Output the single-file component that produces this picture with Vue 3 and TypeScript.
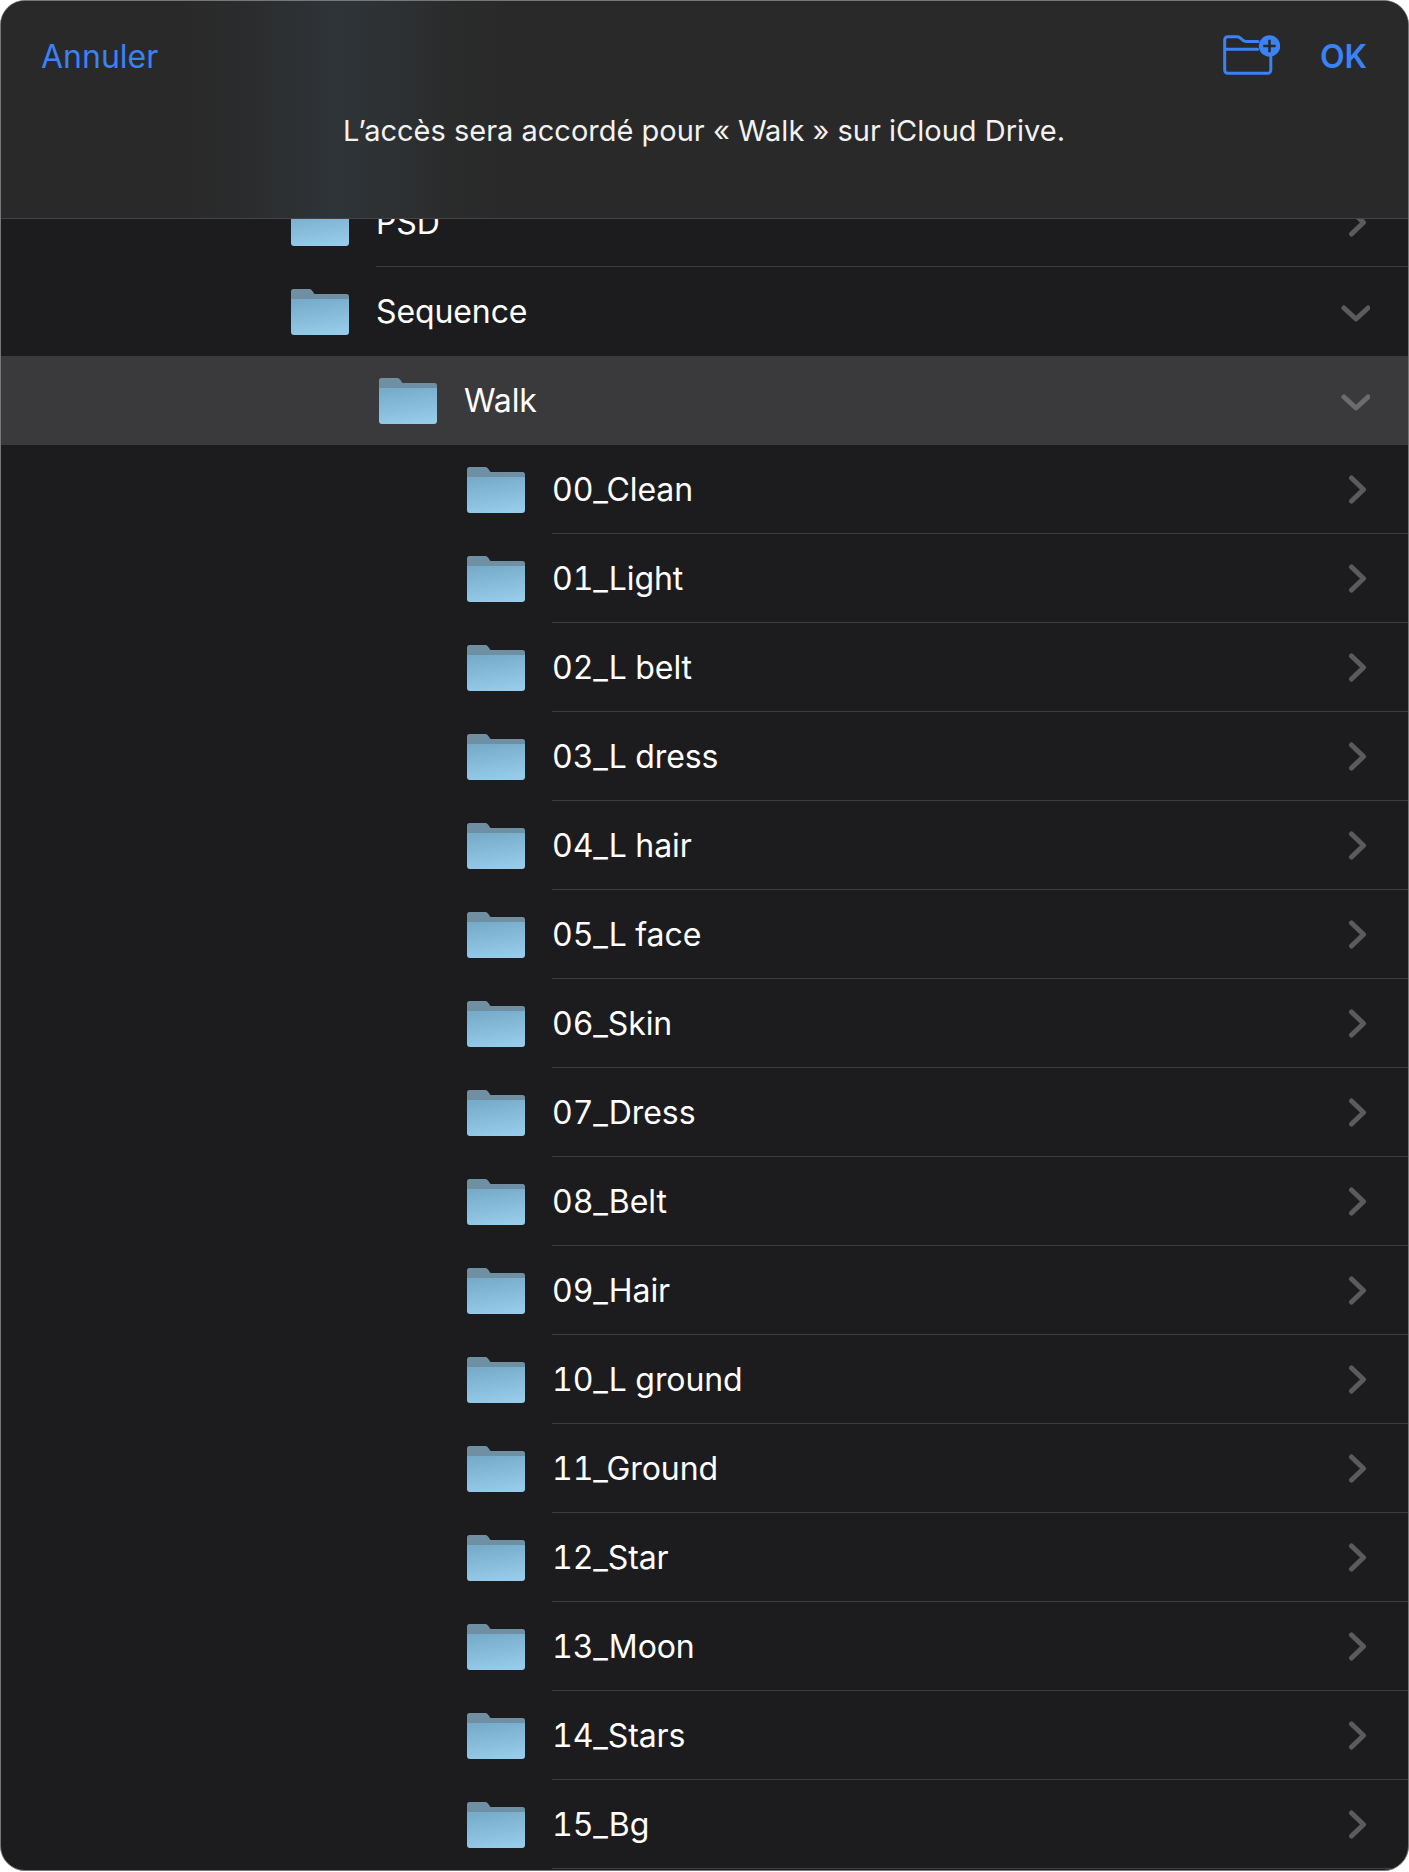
<template>
  <div class="picker">
    <header class="picker__bar">
      <div class="picker__actions">
        <button class="text-btn">Annuler</button>
        <div class="picker__right">
          <svg class="new-folder" width="57" height="40" viewBox="0 0 57 40" fill="none">
            <path
              d="M47.8 20v15.2a3 3 0 0 1-3 3H4.700a3 3 0 0 1-3-3V4.800a3 3 0 0 1 3-3h9.200c2.600 0 3.400 1 4.600 2.200 1.200 1.200 2 2.400 4.400 2.400H35M2 14.200h32.500"
              stroke="#3b82f6"
              stroke-width="3"
              stroke-linecap="round"
              stroke-linejoin="round"
            />
            <circle cx="46.500" cy="11" r="10.700" fill="#3b82f6" />
            <path d="M46.500 4.800v12.400M40.300 11h12.400" stroke="#292929" stroke-width="2.600" />
          </svg>
          <button class="text-btn text-btn--bold">OK</button>
        </div>
      </div>
      <p class="picker__note">L’accès sera accordé pour « Walk » sur iCloud Drive.</p>
    </header>

    <ul class="tree">
      <li
        v-for="(row, i) in rows"
        :key="row.name"
        class="row"
        :class="{ 'row--selected': row.selected }"
        :style="{ paddingLeft: indent(row.depth) }"
      >
        <svg class="folder" width="58" height="46" viewBox="0 0 58 46">
          <defs>
            <linearGradient :id="`folder-${i}`" x1="0.3" y1="0" x2="0.55" y2="1">
              <stop offset="0" stop-color="#76abc9" />
              <stop offset="1" stop-color="#96cbea" />
            </linearGradient>
          </defs>
          <path
            d="M0 2.500A2.500 2.500 0 0 1 2.500 0H18c1.500 0 2.300.6 3 1.600L23.500 5H55.500A2.500 2.500 0 0 1 58 7.500V12H0z"
            fill="#6f8fa3"
          />
          <path
            d="M0 10H58V43A3 3 0 0 1 55 46H3A3 3 0 0 1 0 43z"
            :fill="`url(#folder-${i})`"
          />
        </svg>
        <div class="row__body" :class="{ 'row__body--plain': row.plain }">
          <span class="row__name">{{ row.name }}</span>
          <svg class="chevron" width="30" height="30" viewBox="0 0 30 30" fill="none">
            <path
              :d="row.open ? 'M4 12L16 23L28 12' : 'M11.500 4L23.500 15.500L11.500 27'"
              stroke-width="5"
              stroke-linecap="round"
              stroke-linejoin="round"
            />
          </svg>
        </div>
      </li>
    </ul>
  </div>
</template>

<script setup lang="ts">
interface Row {
  name: string;
  depth: number;
  open?: boolean;
  selected?: boolean;
  plain?: boolean;
}

const children = [
  '00_Clean',
  '01_Light',
  '02_L belt',
  '03_L dress',
  '04_L hair',
  '05_L face',
  '06_Skin',
  '07_Dress',
  '08_Belt',
  '09_Hair',
  '10_L ground',
  '11_Ground',
  '12_Star',
  '13_Moon',
  '14_Stars',
  '15_Bg',
];

const rows: Row[] = [
  { name: 'PSD', depth: 0 },
  { name: 'Sequence', depth: 0, open: true, plain: true },
  { name: 'Walk', depth: 1, open: true, selected: true, plain: true },
  ...children.map((name) => ({ name, depth: 2 })),
];

const indent = (depth: number) => `${290 + depth * 88}px`;
</script>

<style>
html,
body {
  margin: 0;
  background: #fff;
}
</style>

<style scoped>
.picker {
  position: relative;
  box-sizing: border-box;
  width: 1409px;
  height: 1871px;
  overflow: hidden;
  border: 1px solid #77777a;
  border-radius: 25px;
  background: #1c1c1e;
  font-family: Inter, "Noto Sans", sans-serif;
  color: #fff;
}

.picker__bar {
  position: absolute;
  top: 0;
  left: 0;
  right: 0;
  z-index: 1;
  box-sizing: border-box;
  height: 218px;
  padding: 36px 41px 0 40px;
  border-bottom: 1px solid #444446;
  background: linear-gradient(
    90deg,
    #292929 170px,
    #2b2c2d 250px,
    #2f3438 335px,
    #2d3032 400px,
    #2a2b2b 450px,
    #292929 520px
  );
}

.picker__actions {
  display: flex;
  align-items: center;
  justify-content: space-between;
}

.picker__right {
  display: flex;
  align-items: center;
  gap: 40px;
}

.new-folder {
  position: relative;
  top: -2px;
}

.text-btn {
  padding: 0;
  border: 0;
  background: none;
  font: 400 32px/40px Inter, "Noto Sans", sans-serif;
  color: #3b82f6;
}

.text-btn--bold {
  font-weight: 600;
}

.picker__note {
  margin: 34px 0 0;
  font-size: 29px;
  line-height: 40px;
  text-align: center;
  color: #f2f2f2;
}

.tree {
  margin: 0;
  padding: 177px 0 0;
  list-style: none;
}

.row {
  display: flex;
  align-items: center;
  gap: 27px;
  height: 89px;
  box-sizing: border-box;
}

.row--selected {
  background: #3a3a3c;
}

.folder {
  flex: none;
}

.chevron {
  stroke: #5b5b5e;
}

.row--selected .chevron {
  stroke: #6c6c6f;
}

.row__body {
  flex: 1;
  display: flex;
  align-items: center;
  justify-content: space-between;
  box-sizing: border-box;
  height: 100%;
  padding-right: 38px;
  border-bottom: 1px solid #3d3d3f;
}

.row__body--plain {
  border-bottom-color: transparent;
}

.row__name {
  font-size: 32px;
  font-variant-numeric: tabular-nums;
  letter-spacing: -0.1px;
  color: #fff;
}
</style>
